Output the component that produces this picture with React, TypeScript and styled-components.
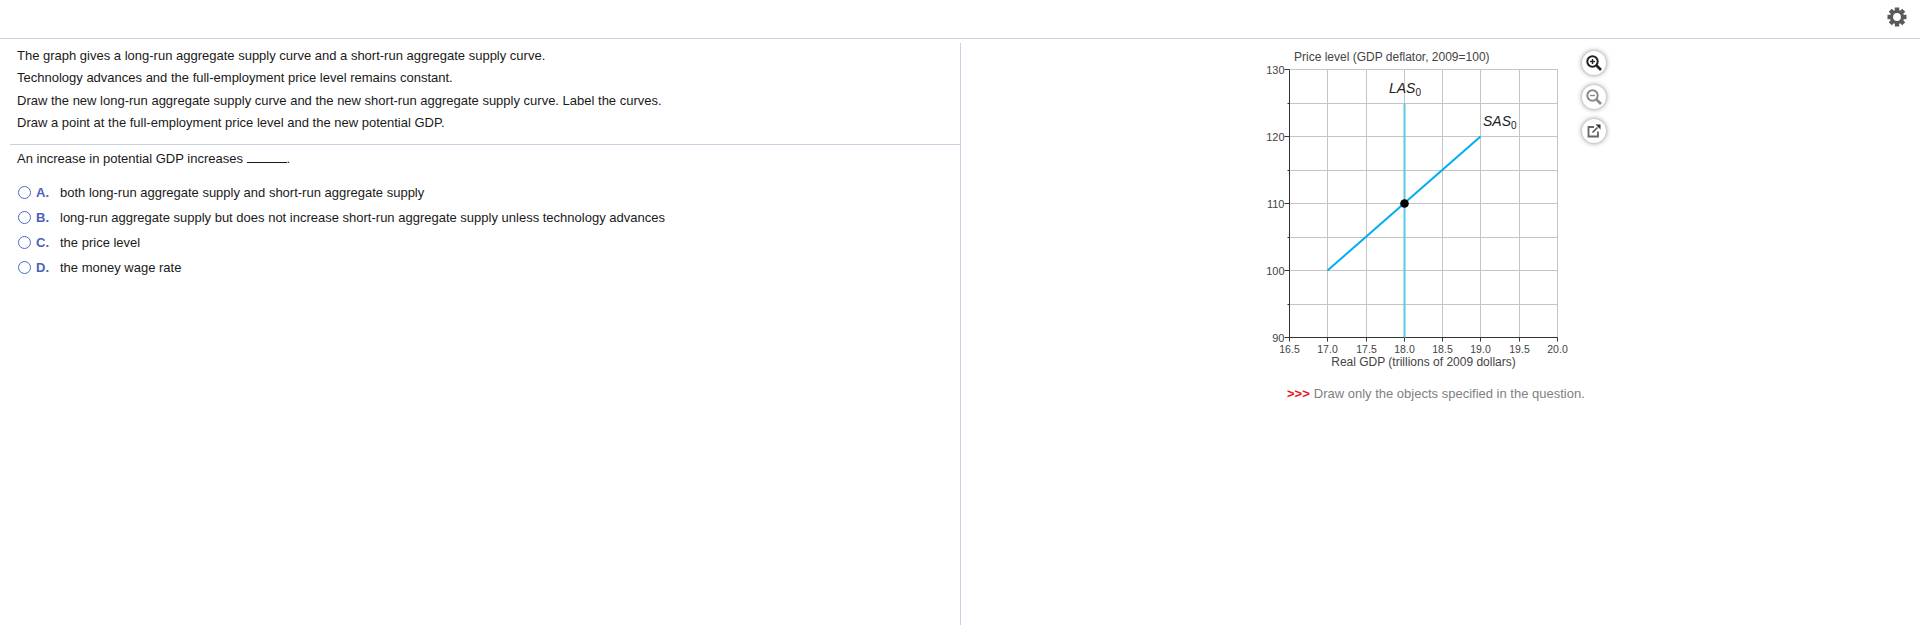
import React from 'react';
import styled, {createGlobalStyle} from 'styled-components';

const Global = createGlobalStyle`
  html, body {
    margin: 0;
    padding: 0;
    background: #fff;
  }
  body {
    font-family: "Liberation Sans", Arial, sans-serif;
    font-size: 13px;
    color: #1a1a1a;
  }
`;

const Page = styled.div`
  width: 1920px;
  height: 625px;
  overflow: hidden;
  display: flex;
  flex-direction: column;
`;

const TopBar = styled.div`
  height: 39px;
  flex: none;
  display: flex;
  justify-content: flex-end;
  align-items: flex-start;
  padding: 7px 13px 0 0;
  box-sizing: border-box;
  border-bottom: 1px solid #c8d0e2;
`;

const Panes = styled.div`
  flex: 1;
  display: flex;
`;

const LeftPane = styled.div`
  width: 960px;
  flex: none;
  margin-top: 4px;
  border-right: 1px solid #c8d0e2;
`;

const Intro = styled.div`
  margin-left: 10px;
  padding: 2px 7px 10px;
  border-bottom: 1px solid #c8d0e2;
`;

const Line = styled.div`
  line-height: 22.25px;
  white-space: nowrap;
`;

const Prompt = styled.div`
  padding: 3px 17px 0;
  line-height: 22px;
`;

const Blank = styled.span`
  display: inline-block;
  width: 40px;
  border-bottom: 1px solid #1a1a1a;
  height: 12px;
`;

const Choices = styled.div`
  padding: 10px 0 0 18px;
  display: flex;
  flex-direction: column;
`;

const Choice = styled.div`
  height: 25px;
  display: flex;
  align-items: center;
`;

const Radio = styled.span`
  width: 13px;
  height: 13px;
  box-sizing: border-box;
  border: 1.5px solid #4a6cc4;
  border-radius: 50%;
  flex: none;
`;

const Letter = styled.span`
  width: 24px;
  margin-left: 5px;
  font-weight: bold;
  color: #4a63b8;
  flex: none;
`;

const RightPane = styled.div`
  flex: 1;
  display: flex;
  padding: 11px 0 0 279px;
`;

const GraphColumn = styled.div`
  width: 330px;
  flex: none;
`;

const Note = styled.div`
  margin: 16px 0 0 47px;
  line-height: 15px;
  color: #808080;
  white-space: nowrap;
`;

const Arrows = styled.span`
  color: #e8141c;
  font-weight: bold;
  margin-right: 4px;
`;

const Tools = styled.div`
  margin: 1px 0 0 12px;
  display: flex;
  flex-direction: column;
  gap: 10px;
`;

const ToolButton = styled.div`
  width: 24px;
  height: 24px;
  border-radius: 50%;
  background: #fff;
  box-shadow: 0 0 5px rgba(0, 0, 0, 0.5);
  display: flex;
  align-items: center;
  justify-content: center;
`;

const Gear = () => (
  <svg width="20" height="20" viewBox="0 0 20 20">
    <g fill="#5a5a5a">
      {[0, 45, 90, 135, 180, 225, 270, 315].map(a => (
        <rect key={a} x="7.8" y="0.5" width="4.4" height="5" transform={`rotate(${a} 10 10)`} />
      ))}
    </g>
    <circle cx="10" cy="10" r="5.5" fill="none" stroke="#5a5a5a" strokeWidth="3.2" />
  </svg>
);

const Magnifier = ({color, plus}: {color: string; plus?: boolean}) => (
  <svg width="18" height="18" viewBox="0 0 18 18">
    <circle cx="7.5" cy="7.5" r="5.2" fill="none" stroke={color} strokeWidth="2" />
    <path d="M11.5 11.5L16 16" stroke={color} strokeWidth="2.6" />
    <path d="M5 7.5H10" stroke={color} strokeWidth="1.4" />
    {plus && <path d="M7.5 5V10" stroke={color} strokeWidth="1.4" />}
  </svg>
);

const PopOut = () => (
  <svg width="16" height="16" viewBox="0 0 16 16">
    <path d="M8 4H2.5V13.5H12V8.5" fill="none" stroke="#666" strokeWidth="1.8" />
    <path d="M6.5 9.5L11.5 4.5" stroke="#555" strokeWidth="1.6" />
    <path d="M9.5 1.5H14.5V6.5Z" fill="#333" />
  </svg>
);

const AXIS_X = 49.5;
const STEP_X = 38.25;
const TOP_Y = 19.5;
const STEP_Y = 33.5;
const xOf = (v: number) => Math.floor(AXIS_X + ((v - 16.5) / 0.5) * STEP_X) + 0.5;
const yOf = (v: number) => Math.floor(TOP_Y + ((130 - v) / 5) * STEP_Y) + 0.5;
const xTicks = [16.5, 17, 17.5, 18, 18.5, 19, 19.5, 20];
const yTicks = [130, 125, 120, 115, 110, 105, 100, 95, 90];

const Graph = () => (
  <svg width="330" height="320" viewBox="0 0 330 320" style={{display: 'block', fontFamily: '"Liberation Sans", Arial, sans-serif'}}>
    <text x="54" y="11" fontSize="12" fill="#444">Price level (GDP deflator, 2009=100)</text>
    {xTicks.slice(1).map(v => (
      <line key={v} x1={xOf(v)} x2={xOf(v)} y1={yOf(130)} y2={yOf(90)} stroke="#c4c4c4" />
    ))}
    {yTicks.slice(0, -1).map(v => (
      <line key={v} x1={AXIS_X} x2={xOf(20)} y1={yOf(v)} y2={yOf(v)} stroke="#c4c4c4" />
    ))}
    <line x1={AXIS_X} x2={AXIS_X} y1={yOf(130)} y2={yOf(90)} stroke="#333" />
    <line x1={AXIS_X} x2={xOf(20)} y1={yOf(90)} y2={yOf(90)} stroke="#333" />
    {yTicks.map(v => (
      <line key={v} x1={v % 10 === 0 ? AXIS_X - 5 : AXIS_X - 2} x2={AXIS_X} y1={yOf(v)} y2={yOf(v)} stroke="#333" />
    ))}
    {yTicks.filter(v => v % 10 === 0).map(v => (
      <text key={v} x={AXIS_X - 5} y={yOf(v) + 4} fontSize="11" textAnchor="end" fill="#444">{v}</text>
    ))}
    {xTicks.map(v => (
      <line key={v} x1={xOf(v)} x2={xOf(v)} y1={yOf(90)} y2={yOf(90) + 4} stroke="#333" />
    ))}
    {xTicks.map(v => (
      <text key={v} x={xOf(v)} y={yOf(90) + 15} fontSize="10.5" textAnchor="middle" fill="#444">{v.toFixed(1)}</text>
    ))}
    <text x={183.5} y={yOf(90) + 28} fontSize="12" textAnchor="middle" fill="#444">Real GDP (trillions of 2009 dollars)</text>
    <line x1={xOf(18)} x2={xOf(18)} y1={yOf(125)} y2={yOf(90)} stroke="#5bc8e6" strokeWidth="2" />
    <line x1={xOf(17)} x2={xOf(19)} y1={yOf(100)} y2={yOf(120)} stroke="#00aeef" strokeWidth="2" />
    <circle cx={xOf(18)} cy={yOf(110)} r="4.3" fill="#000" />
    <text x="149" y="43" fontSize="14" fontStyle="italic" fill="#222">LAS<tspan fontSize="10" fontStyle="normal" dy="3">0</tspan></text>
    <text x="243" y="76" fontSize="14" fontStyle="italic" fill="#222">SAS<tspan fontSize="10" fontStyle="normal" dy="3">0</tspan></text>
  </svg>
);

const App = () => (
  <Page>
    <Global />
    <TopBar>
      <Gear />
    </TopBar>
    <Panes>
      <LeftPane>
        <Intro>
          <Line>The graph gives a long-run aggregate supply curve and a short-run aggregate supply curve.</Line>
          <Line>Technology advances and the full-employment price level remains constant.</Line>
          <Line>Draw the new long-run aggregate supply curve and the new short-run aggregate supply curve. Label the curves.</Line>
          <Line>Draw a point at the full-employment price level and the new potential GDP.</Line>
        </Intro>
        <Prompt>
          An increase in potential GDP increases <Blank />.
        </Prompt>
        <Choices>
          <Choice><Radio /><Letter>A.</Letter>both long-run aggregate supply and short-run aggregate supply</Choice>
          <Choice><Radio /><Letter>B.</Letter>long-run aggregate supply but does not increase short-run aggregate supply unless technology advances</Choice>
          <Choice><Radio /><Letter>C.</Letter>the price level</Choice>
          <Choice><Radio /><Letter>D.</Letter>the money wage rate</Choice>
        </Choices>
      </LeftPane>
      <RightPane>
        <GraphColumn>
          <Graph />
          <Note><Arrows>&gt;&gt;&gt;</Arrows>Draw only the objects specified in the question.</Note>
        </GraphColumn>
        <Tools>
          <ToolButton><Magnifier color="#222" plus /></ToolButton>
          <ToolButton><Magnifier color="#8a8a8a" /></ToolButton>
          <ToolButton><PopOut /></ToolButton>
        </Tools>
      </RightPane>
    </Panes>
  </Page>
);

export default App;
